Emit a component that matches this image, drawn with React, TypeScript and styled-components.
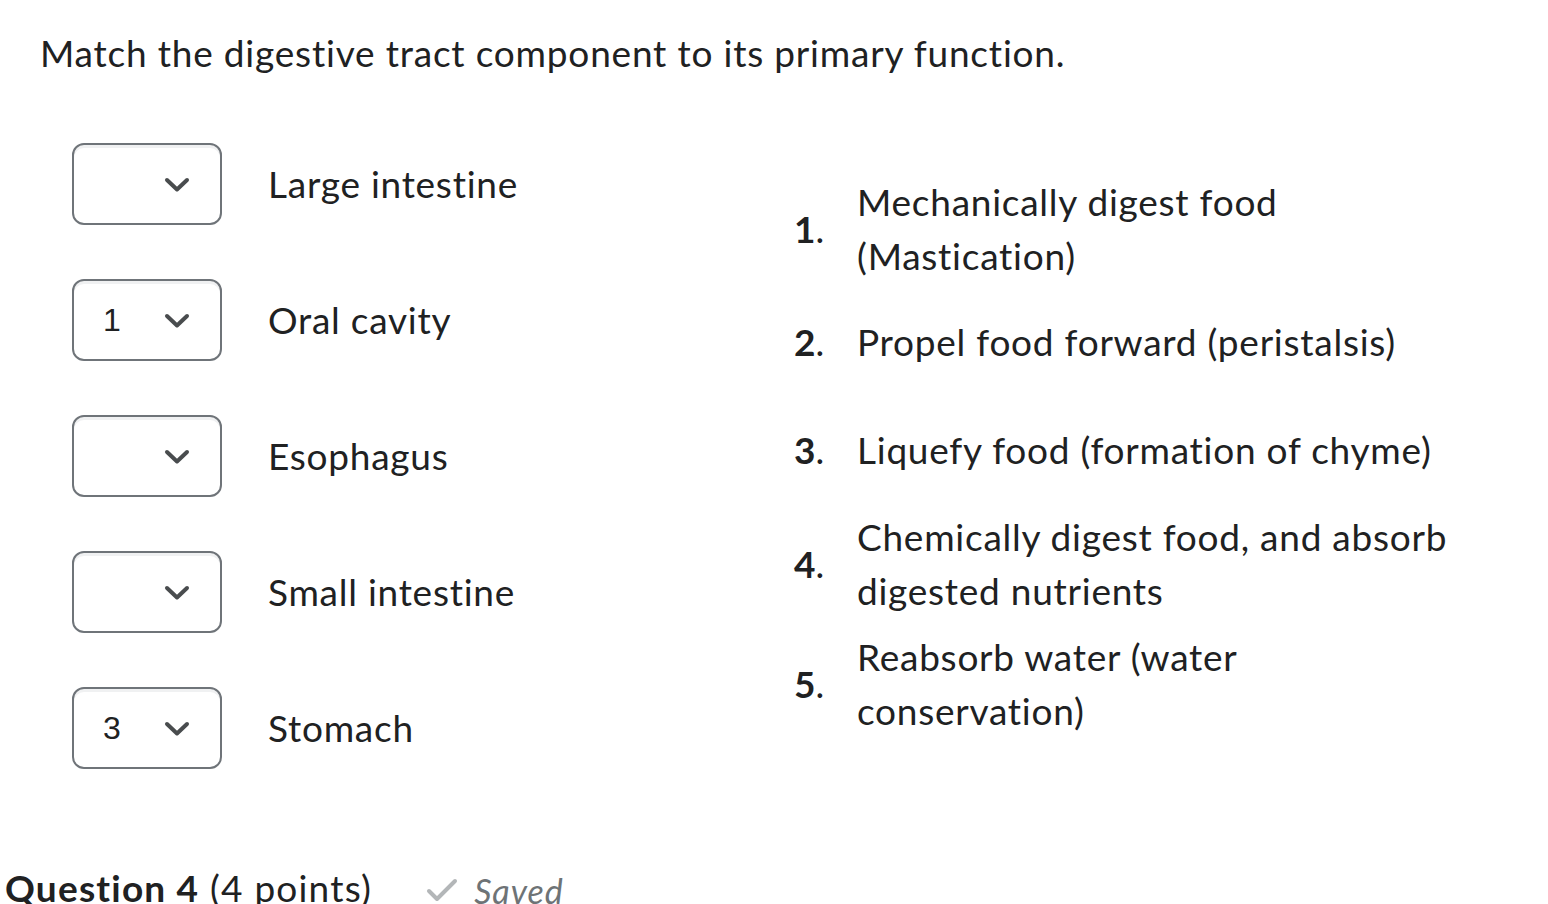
import React from "react";
import styled, { createGlobalStyle } from "styled-components";

const GlobalStyle = createGlobalStyle`
  html, body {
    margin: 0;
    padding: 0;
    background: #ffffff;
  }
  body {
    font-family: Lato, "Open Sans", "Liberation Sans", sans-serif;
    font-variant-ligatures: none;
    letter-spacing: 0.75px;
    color: #202122;
    overflow: hidden;
  }
`;

const leftRows = [
  { value: "", label: "Large intestine" },
  { value: "1", label: "Oral cavity" },
  { value: "", label: "Esophagus" },
  { value: "", label: "Small intestine" },
  { value: "3", label: "Stomach" },
];

const choices = [
  { n: 1, text: "Mechanically digest food (Mastication)", gap: 0 },
  { n: 2, text: "Propel food forward (peristalsis)", gap: 32 },
  { n: 3, text: "Liquefy food (formation of chyme)", gap: 54 },
  { n: 4, text: "Chemically digest food, and absorb digested nutrients", gap: 33 },
  { n: 5, text: "Reabsorb water (water conservation)", gap: 12 },
];

export default function App() {
  return (
    <>
      <GlobalStyle />
      <Page>
        <Prompt>Match the digestive tract component to its primary function.</Prompt>
        <MatchArea>
          <LeftColumn>
            {leftRows.map((row) => (
              <Row key={row.label}>
                <SelectBox>
                  <SelectValue>{row.value}</SelectValue>
                  <Chevron viewBox="0 0 26 16" aria-hidden>
                    <path d="M3 3 L13 12.5 L23 3" />
                  </Chevron>
                </SelectBox>
                <RowLabel>{row.label}</RowLabel>
              </Row>
            ))}
          </LeftColumn>
          <ChoiceList>
            {choices.map((c) => (
              <Choice key={c.n} $gap={c.gap}>
                <ChoiceNum>
                  <b>{c.n}</b>.
                </ChoiceNum>
                <ChoiceText>{c.text}</ChoiceText>
              </Choice>
            ))}
          </ChoiceList>
        </MatchArea>
        <QuestionBar>
          <QuestionTitle>
            <strong>Question 4</strong> (4 points)
          </QuestionTitle>
          <SavedStatus>
            <CheckIcon viewBox="0 0 32 24" aria-hidden>
              <path d="M3 13 L11 21 L29 3" />
            </CheckIcon>
            <em>Saved</em>
          </SavedStatus>
        </QuestionBar>
      </Page>
    </>
  );
}

/**
 * styles
 */
const Page = styled.div`
  padding: 31px 0 0 40px;
`;

const Prompt = styled.h1`
  margin: 0;
  font-size: 37px;
  font-weight: 400;
  line-height: 1.2;
  letter-spacing: 0.8px;
`;

const MatchArea = styled.div`
  display: flex;
  align-items: center;
  margin-top: 68px;
  padding-left: 32px;
`;

const LeftColumn = styled.div`
  display: flex;
  flex-direction: column;
  gap: 54px;
  width: 723px;
`;

const Row = styled.div`
  display: flex;
  align-items: center;
  gap: 46px;
`;

const SelectBox = styled.div`
  box-sizing: border-box;
  position: relative;
  width: 150px;
  height: 82px;
  border: 2px solid #6f7479;
  border-radius: 12px;
  box-shadow: inset 0 3px 0 #f0f1f2;
  display: flex;
  align-items: center;
  padding-left: 29px;
`;

const SelectValue = styled.span`
  font-family: "Liberation Sans", Arial, sans-serif;
  font-size: 32px;
  letter-spacing: 0;
  color: #202122;
  width: 40px;
`;

const Chevron = styled.svg`
  position: absolute;
  right: 30px;
  top: 32px;
  width: 26px;
  height: 16px;
  fill: none;
  stroke: #494c4e;
  stroke-width: 4;
  stroke-linecap: round;
  stroke-linejoin: round;
`;

const RowLabel = styled.span`
  font-size: 37px;
  line-height: 1.2;
`;

const ChoiceList = styled.ol`
  list-style: none;
  margin: 0;
  padding: 0;
  display: flex;
  flex-direction: column;
`;

const Choice = styled.li<{ $gap: number }>`
  display: flex;
  align-items: center;
  margin-top: ${({ $gap }) => $gap}px;
`;

const ChoiceNum = styled.span`
  width: 63px;
  flex: none;
  margin-left: -1px;
  font-size: 37px;
  line-height: 1.2;
  letter-spacing: 0;
  b {
    font-weight: 700;
  }
`;

const ChoiceText = styled.span`
  width: 600px;
  font-size: 37px;
  line-height: 54px;
`;

const QuestionBar = styled.div`
  display: flex;
  align-items: baseline;
  gap: 54px;
  margin: 97px 0 0 -35px;
`;

const QuestionTitle = styled.h2`
  margin: 0;
  font-size: 37px;
  font-weight: 400;
  line-height: 1.2;
  letter-spacing: 1.2px;
  strong {
    font-weight: 700;
  }
`;

const SavedStatus = styled.span`
  display: inline-flex;
  align-items: center;
  gap: 16px;
  font-size: 34px;
  letter-spacing: 1px;
  color: #6e7376;
`;

const CheckIcon = styled.svg`
  width: 32px;
  height: 24px;
  fill: none;
  stroke: #b3b6b8;
  stroke-width: 4;
  stroke-linecap: round;
  stroke-linejoin: round;
`;
